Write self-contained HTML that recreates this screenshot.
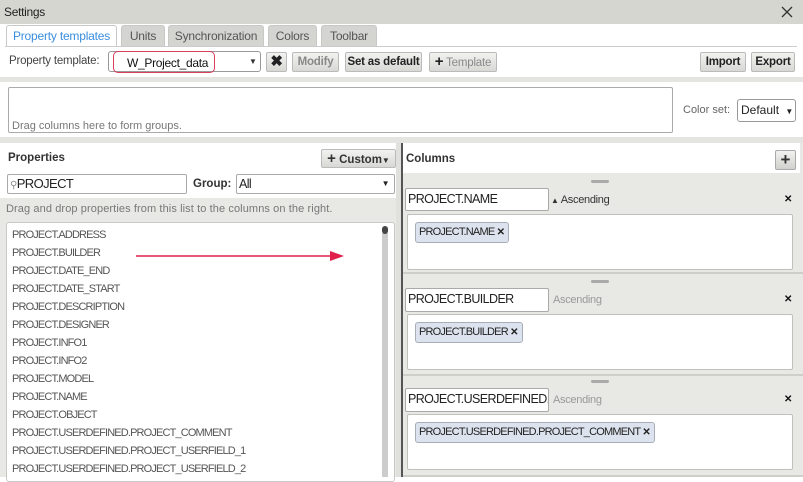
<!DOCTYPE html>
<html><head><style>
*{box-sizing:border-box;margin:0;padding:0}
body{width:803px;height:477px;position:relative;overflow:hidden;background:#fff;font-family:"Liberation Sans",sans-serif;font-size:12px;color:#333}
.a{position:absolute}
.tab{position:absolute;top:25px;height:21px;background:#d4d4d0;border:1px solid #c8c8c4;border-bottom:none;border-radius:3px 3px 0 0;font-size:12px;color:#555;text-align:center;line-height:20px;letter-spacing:-0.2px}
.btn{position:absolute;top:52px;height:20px;background:linear-gradient(#f2f2f0,#d8d8d4);border:1px solid #bbb;border-radius:2px;font-weight:bold;font-size:11.5px;text-align:center;line-height:18px;color:#222;letter-spacing:-0.2px}
.li{position:absolute;left:12px;font-size:11px;color:#555;letter-spacing:-0.85px}
.inp{position:absolute;background:#fff;border:1px solid #aaa;border-radius:2px;font-size:12.5px;color:#222;line-height:20px;padding-left:2px;letter-spacing:-0.6px;overflow:hidden;white-space:nowrap}
.box{position:absolute;left:407px;width:386px;height:56px;background:#fff;border:1px solid #c0c0bc;border-radius:2px}
.chip{position:absolute;left:7px;top:7px;height:21px;background:#dde3ee;border:1px solid #a8aeb8;border-radius:3px;font-size:11px;line-height:19px;padding:0 3px;color:#222;letter-spacing:-0.8px;white-space:nowrap}
.chip b{font-size:10px;letter-spacing:0}
.hdl{position:absolute;left:591px;width:18px;height:3px;background:#aaa;border-radius:2px}
.sep{position:absolute;left:403px;width:400px;height:2px;background:#cfcfca}
.x{position:absolute;left:784px;font-weight:bold;font-size:10px;color:#111}
.asc{position:absolute;left:553px;font-size:11px;color:#999;letter-spacing:-0.3px}
</style></head><body>
<div class="a" style="left:0;top:0;width:803px;height:24px;background:#d6d6d0"></div>
<div class="a" style="left:4px;top:5px;font-size:12px;color:#222;letter-spacing:-0.3px">Settings</div>
<svg class="a" style="left:781px;top:6px" width="12" height="12"><path d="M1 1L11 11M11 1L1 11" stroke="#333" stroke-width="1.3"/></svg>
<div class="a" style="left:0;top:24px;width:803px;height:453px;background:#fff"></div>
<div class="tab" style="left:6px;width:111px;background:#fff;color:#3a8ee0;height:22px">Property templates</div>
<div class="tab" style="left:121px;width:44px">Units</div>
<div class="tab" style="left:168px;width:96px">Synchronization</div>
<div class="tab" style="left:268px;width:49px">Colors</div>
<div class="tab" style="left:321px;width:56px">Toolbar</div>
<div class="a" style="left:5px;top:46px;width:792px;height:1px;background:#ccc"></div>
<div class="a" style="left:9px;top:55px;font-size:11.5px;color:#444;letter-spacing:-0.2px">Property template:</div>
<div class="a" style="left:108px;top:51px;width:153px;height:21px;border:1px solid #999;border-radius:3px;background:#fff"></div>
<div class="a" style="left:113px;top:51px;width:102px;height:22px;border:1px solid #d8405a;border-radius:5px"></div>
<div class="a" style="left:127px;top:56px;font-size:12px;color:#111;letter-spacing:-0.3px">W_Project_data</div>
<div class="a" style="left:249px;top:57px;font-size:8px">▼</div>
<div class="btn" style="left:266px;width:21px;font-size:15px;line-height:18px">✖</div>
<div class="btn" style="left:292px;width:47px;color:#888">Modify</div>
<div class="btn" style="left:345px;width:77px">Set as default</div>
<div class="btn" style="left:429px;width:68px;color:#888;font-weight:normal"><b style="color:#222;font-size:15px">+</b> Template</div>
<div class="btn" style="left:700px;width:46px">Import</div>
<div class="btn" style="left:751px;width:44px">Export</div>
<div class="a" style="left:0;top:77px;width:803px;height:5px;background:#e4e4e0"></div>
<div class="a" style="left:8px;top:87px;width:665px;height:46px;border:1px solid #aaa;border-radius:2px"></div>
<div class="a" style="left:12px;top:120px;font-size:11px;color:#777;letter-spacing:0">Drag columns here to form groups.</div>
<div class="a" style="left:683px;top:104px;font-size:11px;color:#666">Color set:</div>
<div class="a" style="left:737px;top:99px;width:59px;height:23px;border:1px solid #999;border-radius:3px;font-size:12px;line-height:21px;padding-left:3px;color:#222">Default <span style="font-size:8px;margin-left:3px">▼</span></div>
<div class="a" style="left:0;top:137px;width:803px;height:6px;background:#e4e4e0"></div>
<!-- left panel -->
<div class="a" style="left:8px;top:152px;font-weight:bold;font-size:11.5px;color:#333">Properties</div>
<div class="a" style="left:321px;top:149px;width:75px;height:19px;background:linear-gradient(#f2f2f0,#d8d8d4);border:1px solid #bbb;border-radius:2px;font-weight:bold;font-size:11.5px;line-height:17px;text-align:center"><span style="font-size:15px">+</span> Custom<span style="font-size:8px">▼</span></div>
<div class="inp" style="left:7px;top:174px;width:180px;height:20px;line-height:18px;font-size:13px"><span style="font-size:10px;color:#888">⚲</span>PROJECT</div>
<div class="a" style="left:193px;top:178px;font-weight:bold;font-size:11.5px">Group:</div>
<div class="inp" style="left:236px;top:174px;width:159px;height:20px;line-height:18px">All<span style="position:absolute;right:5px;font-size:8px">▼</span></div>
<div class="a" style="left:0;top:198px;width:400px;height:22px;background:#e8e8e4"></div>
<div class="a" style="left:6px;top:203px;font-size:11px;color:#777;letter-spacing:0.1px">Drag and drop properties from this list to the columns on the right.</div>
<div class="a" style="left:0;top:220px;width:400px;height:257px;background:#e8e8e4"></div>
<div class="a" style="left:6px;top:222px;width:389px;height:260px;background:#fff;border:1px solid #c8c8c4;border-radius:3px"></div>
<div class="a" style="left:382px;top:233px;width:6px;height:244px;background:#ccc"></div>
<div class="a" style="left:382px;top:226px;width:6px;height:8px;background:#444;border-radius:3px"></div>
<div class="li" style="top:229px">PROJECT.ADDRESS</div>
<div class="li" style="top:247px">PROJECT.BUILDER</div>
<div class="li" style="top:265px">PROJECT.DATE_END</div>
<div class="li" style="top:283px">PROJECT.DATE_START</div>
<div class="li" style="top:301px">PROJECT.DESCRIPTION</div>
<div class="li" style="top:319px">PROJECT.DESIGNER</div>
<div class="li" style="top:337px">PROJECT.INFO1</div>
<div class="li" style="top:355px">PROJECT.INFO2</div>
<div class="li" style="top:373px">PROJECT.MODEL</div>
<div class="li" style="top:391px">PROJECT.NAME</div>
<div class="li" style="top:409px">PROJECT.OBJECT</div>
<div class="li" style="top:427px">PROJECT.USERDEFINED.PROJECT_COMMENT</div>
<div class="li" style="top:445px">PROJECT.USERDEFINED.PROJECT_USERFIELD_1</div>
<div class="li" style="top:463px">PROJECT.USERDEFINED.PROJECT_USERFIELD_2</div>
<svg class="a" style="left:130px;top:248px" width="220" height="16"><line x1="6" y1="8" x2="204" y2="8" stroke="#e0204a" stroke-width="1.5"/><path d="M200 3 L214 8 L200 13 Z" fill="#e0204a"/></svg>
<!-- divider -->
<div class="a" style="left:396px;top:143px;width:7px;height:334px;background:#e0e0dc"></div>
<div class="a" style="left:401px;top:143px;width:2px;height:334px;background:#555"></div>
<!-- right panel -->
<div class="a" style="left:403px;top:143px;width:400px;height:334px;background:#e8e8e4"></div>
<div class="a" style="left:403px;top:143px;width:397px;height:30px;background:#fff"></div>
<div class="a" style="left:406px;top:153px;font-weight:bold;font-size:11.5px;color:#333">Columns</div>
<div class="a" style="left:775px;top:150px;width:21px;height:20px;background:linear-gradient(#f2f2f0,#d0d0cc);border:1px solid #aaa;border-radius:2px;font-weight:bold;font-size:17px;text-align:center;line-height:18px">+</div>
<div class="hdl" style="top:180px"></div>
<div class="inp" style="left:405px;top:188px;width:144px;height:23px">PROJECT.NAME</div>
<div class="asc" style="left:551px;top:194px;color:#333"><span style="font-size:8px">▲</span> Ascending</div>
<div class="x" style="top:194px">✕</div>
<div class="box" style="top:214px"><div class="chip">PROJECT.NAME <b>✕</b></div></div>
<div class="sep" style="top:272px"></div>
<div class="hdl" style="top:280px"></div>
<div class="inp" style="left:405px;top:288px;width:144px;height:24px">PROJECT.BUILDER</div>
<div class="asc" style="top:294px">Ascending</div>
<div class="x" style="top:294px">✕</div>
<div class="box" style="top:314px"><div class="chip">PROJECT.BUILDER <b>✕</b></div></div>
<div class="sep" style="top:374px"></div>
<div class="hdl" style="top:380px"></div>
<div class="inp" style="left:405px;top:388px;width:144px;height:24px">PROJECT.USERDEFINED.PROJECT_COMMENT</div>
<div class="asc" style="top:394px">Ascending</div>
<div class="x" style="top:394px">✕</div>
<div class="box" style="top:414px"><div class="chip">PROJECT.USERDEFINED.PROJECT_COMMENT <b>✕</b></div></div>
<div class="sep" style="top:475px"></div>
</body></html>
